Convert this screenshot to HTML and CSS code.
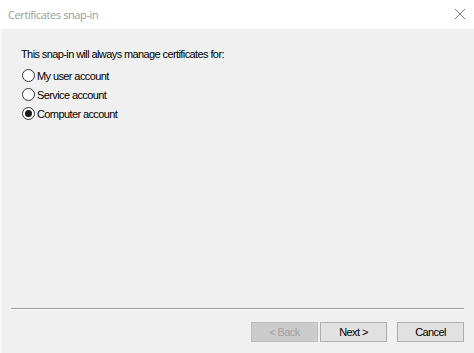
FILE: index.html
```html
<!DOCTYPE html>
<html lang="en">
<head>
    <meta charset="UTF-8">
    <title>Certificates snap-in</title>
    <link rel="stylesheet" href="styles.css">
</head>
<body>
<div class="dialog">
    <div class="titlebar">
        <span class="title">Certificates snap-in</span>
        <svg class="close" width="12" height="12" viewBox="0 0 12 12">
            <path d="M1 1 L11 11 M11 1 L1 11" stroke="#7a7a7a" stroke-width="1" fill="none"/>
        </svg>
    </div>
    <div class="main">
        <p class="label">This snap-in will always manage certificates for:</p>
        <ul class="options">
            <li><span class="radio"></span>My user account</li>
            <li><span class="radio"></span>Service account</li>
            <li><span class="radio checked"></span>Computer account</li>
        </ul>
    </div>
    <div class="footer">
        <div class="sep"></div>
        <div class="buttons">
            <span class="btn disabled">&lt; Back</span>
            <span class="btn">Next &gt;</span>
            <span class="btn cancel">Cancel</span>
        </div>
    </div>
</div>
</body>
</html>
```

FILE: styles.css
```css
*{
    margin: 0px;
    padding: 0px;
    list-style: none;
    box-sizing: border-box;
}

body{
    font-family: "Liberation Sans", Arial, sans-serif;
    font-size: 11px;
    letter-spacing: -0.6px;
    color: #000000;
}

.dialog{
    width: 474px;
    height: 353px;
    display: flex;
    flex-direction: column;
    background-color: #f0f0f0;
    border-left: 2px solid #f7f7f7;
}

.titlebar{
    height: 29px;
    background-color: #ffffff;
    display: flex;
    align-items: center;
    justify-content: space-between;
    padding: 0 8px 0 8px;
    margin-left: -2px;
}

.title{
    color: #999999;
    font-family: "Open Sans", "Noto Sans", sans-serif;
    font-size: 11px;
    letter-spacing: -0.4px;
    padding-bottom: 1px;
}

.close{
    margin-bottom: 2px;
}

.main{
    flex: 1;
    padding: 18px 19px 0 19px;
}

.label{
    line-height: 15px;
    margin-bottom: 4px;
}

.options li{
    height: 19px;
    display: flex;
    align-items: center;
}

.radio{
    width: 13px;
    height: 13px;
    border: 1px solid #333333;
    border-radius: 50%;
    background-color: #ffffff;
    margin-left: 1px;
    margin-right: 2px;
    display: flex;
    align-items: center;
    justify-content: center;
}

.radio.checked::after{
    content: "";
    width: 7px;
    height: 7px;
    border-radius: 50%;
    background-color: #1a1a1a;
}

.footer{
    padding: 0 10px 11px 9px;
}

.sep{
    border-top: 1px solid #a0a0a0;
    border-bottom: 1px solid #ffffff;
    margin-bottom: 12px;
}

.buttons{
    display: flex;
    justify-content: flex-end;
    gap: 2px;
}

.btn{
    width: 67px;
    height: 20px;
    background-color: #e1e1e1;
    border: 1px solid #adadad;
    display: flex;
    align-items: center;
    justify-content: center;
}

.btn.disabled{
    background-color: #cccccc;
    border-color: #bfbfbf;
    color: #a0a0a0;
}

.btn.cancel{
    margin-left: 8px;
}
```
